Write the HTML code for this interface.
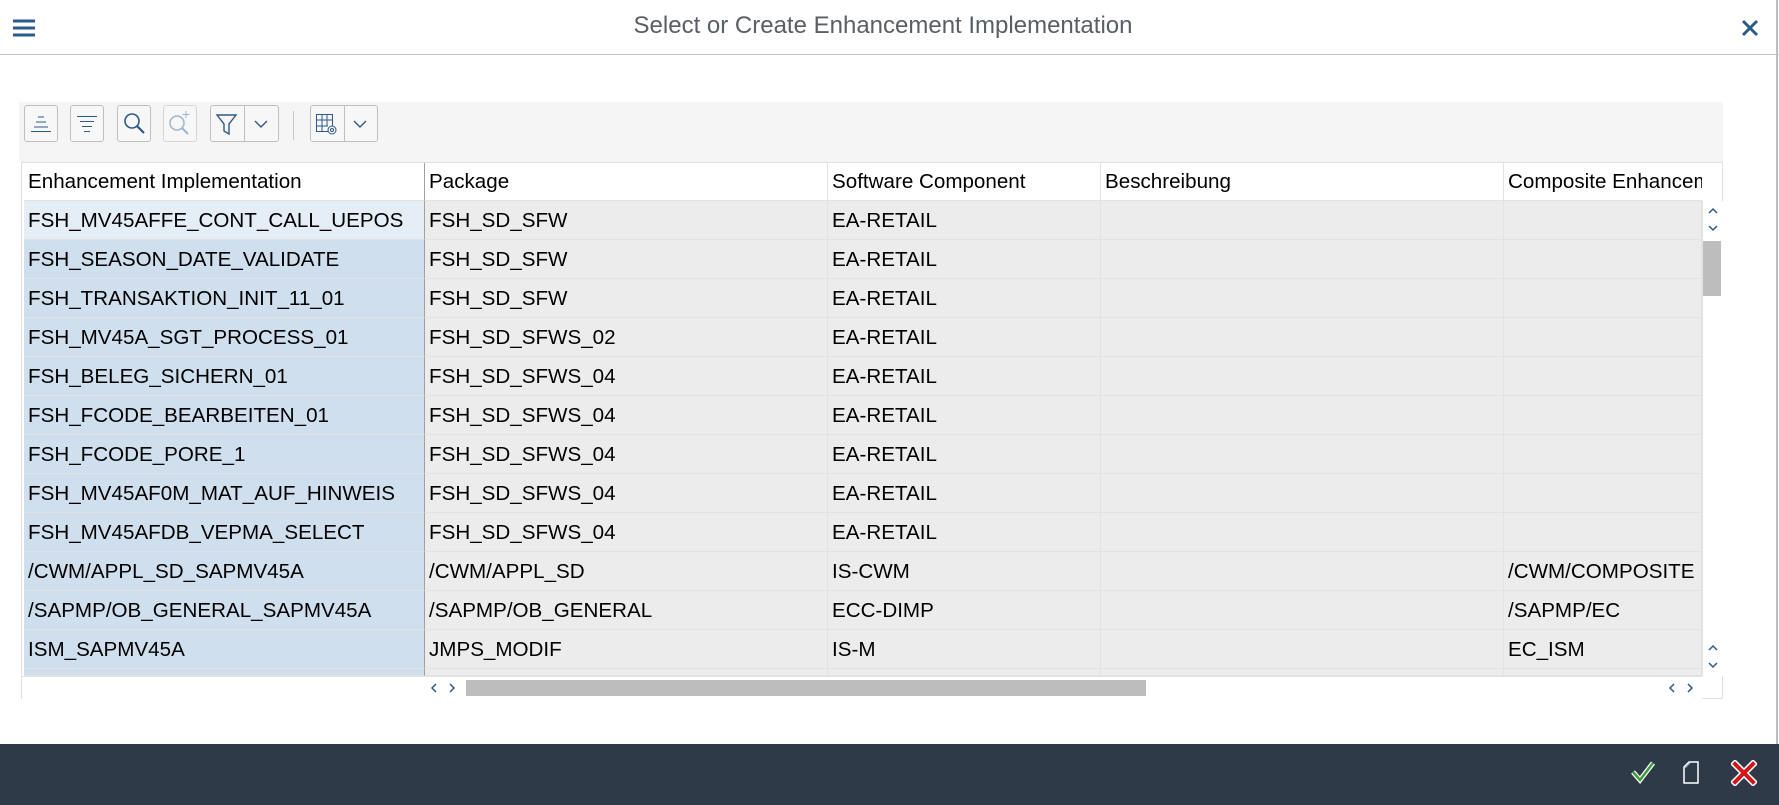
<!DOCTYPE html>
<html><head><meta charset="utf-8"><style>
*{margin:0;padding:0;box-sizing:border-box}
body{width:1779px;height:805px;overflow:hidden;background:#fff;font-family:"Liberation Sans",Arial,sans-serif;position:relative}
.abs{position:absolute}
.hdr{left:0;top:0;width:1779px;height:55px;border-bottom:1px solid #c4c4c4}
.title{left:0;width:1766px;top:12px;text-align:center;font-size:24px;color:#5a5f64}
.tb{left:19px;top:102px;width:1704px;height:60px;background:#f5f5f5}
.btn{position:absolute;top:105px;height:37px;border:1px solid #bfbfbf;border-radius:3px;background:#f7f7f7}
.tbl{left:21px;top:162px;width:1702px;height:537px;border:1px solid #e0e0e0;background:#fff}
.row{position:absolute;left:24px;height:39px;font-size:20.6px;line-height:39px;color:#000}
.c{position:absolute;top:0;height:39px;padding-left:4px;white-space:nowrap;overflow:hidden;border-bottom:1px solid #e2e2e2;border-right:1px solid #e2e2e2}
.foot{left:0;top:744px;width:1779px;height:61px;background:#2e3a48}
</style></head><body>
<div class="abs hdr"></div>
<svg class="abs" style="left:12px;top:18px" width="24" height="20"><g stroke="#2c5a8a" stroke-width="3"><line x1="1" y1="3" x2="23" y2="3"/><line x1="1" y1="10" x2="23" y2="10"/><line x1="1" y1="17" x2="23" y2="17"/></g></svg>
<div class="abs title">Select or Create Enhancement Implementation</div>
<svg class="abs" style="left:1740px;top:18px" width="20" height="20"><g stroke="#2c5a8a" stroke-width="3"><line x1="3" y1="3" x2="17" y2="17"/><line x1="17" y1="3" x2="3" y2="17"/></g></svg>
<div class="abs" style="left:1776px;top:0;width:2px;height:744px;background:#bdbdbd"></div>

<div class="abs tb"></div>
<div class="btn" style="left:24px;width:34px"><svg width="32" height="35"><g stroke="#2c5a8a" stroke-width="1"><line x1="13" y1="11" x2="19" y2="11"/><line x1="11" y1="16" x2="21" y2="16"/><line x1="9" y1="21" x2="23" y2="21"/><line x1="6" y1="25.5" x2="26" y2="25.5"/></g></svg></div>
<div class="btn" style="left:70px;width:34px"><svg width="32" height="35"><g stroke="#2c5a8a" stroke-width="1"><line x1="6" y1="10.5" x2="26" y2="10.5"/><line x1="9" y1="15.5" x2="23" y2="15.5"/><line x1="11" y1="20.5" x2="21" y2="20.5"/><line x1="13" y1="25.5" x2="19" y2="25.5"/></g></svg></div>
<div class="btn" style="left:117px;width:34px"><svg width="32" height="35"><circle cx="14" cy="15" r="7" fill="none" stroke="#2c5a8a" stroke-width="1.6"/><line x1="19" y1="20" x2="26" y2="27" stroke="#2c5a8a" stroke-width="2.2"/></svg></div>
<div class="btn" style="left:163px;width:34px;border-color:#d6d6d6"><svg width="32" height="35"><circle cx="13" cy="17" r="7" fill="none" stroke="#9fb6cc" stroke-width="1.5"/><line x1="18" y1="22" x2="24" y2="28" stroke="#9fb6cc" stroke-width="2"/><line x1="22" y1="5" x2="22" y2="12" stroke="#9fb6cc"/><line x1="18.5" y1="8.5" x2="25.5" y2="8.5" stroke="#9fb6cc"/></svg></div>
<div class="btn" style="left:210px;width:69px"><svg width="67" height="35"><path d="M6 9 H25 L18 18 V28 L13 25 V18 Z" fill="none" stroke="#2c5a8a" stroke-width="1.4"/><line x1="33.5" y1="0" x2="33.5" y2="35" stroke="#bfbfbf"/><path d="M44 15 L50 21 L56 15" fill="none" stroke="#2c5a8a" stroke-width="1.4"/></svg></div>
<div class="abs" style="left:293px;top:111px;width:1px;height:29px;background:#c8c8c8"></div>
<div class="btn" style="left:310px;width:68px"><svg width="66" height="35"><g stroke="#2c5a8a" stroke-width="1" fill="none"><rect x="5.5" y="8.5" width="16" height="17"/><line x1="5.5" y1="14" x2="21.5" y2="14"/><line x1="5.5" y1="20" x2="17" y2="20"/><line x1="11" y1="8.5" x2="11" y2="25.5"/><line x1="16" y1="8.5" x2="16" y2="20"/><circle cx="21" cy="24" r="4" fill="#f7f7f7"/><circle cx="21" cy="24" r="1.5"/></g><line x1="33.5" y1="0" x2="33.5" y2="35" stroke="#bfbfbf"/><path d="M43 15 L49 21 L55 15" fill="none" stroke="#2c5a8a" stroke-width="1.4"/></svg></div>

<div class="abs tbl"></div>
<div class="row" style="top:163px;background:#f5f5f5;height:38px;line-height:38px">
<div class="c" style="left:0;width:401px;height:38px;border-right-color:#a0a0a0">Enhancement Implementation</div>
<div class="c" style="left:401px;width:403px;height:38px">Package</div>
<div class="c" style="left:804px;width:273px;height:38px">Software Component</div>
<div class="c" style="left:1077px;width:403px;height:38px">Beschreibung</div>
<div class="c" style="left:1480px;width:198px;height:38px;border-right:none">Composite Enhancement</div>
</div>
<div class="abs" style="left:1702px;top:201px;width:21px;height:475px;background:#fff;border-left:1px solid #e2e2e2"></div>
<svg class="abs" style="left:1702px;top:201px" width="21" height="475"><g stroke="#2c5a8a" stroke-width="1.5" fill="none"><path d="M7 12 L11 8 L15 12"/><path d="M7 25 L11 29 L15 25"/><path d="M7 449 L11 445 L15 449"/><path d="M7 462 L11 466 L15 462"/></g><rect x="1" y="40" width="18" height="55" fill="#bdbdbd"/></svg>
<div class="abs" style="left:22px;top:676px;width:1680px;height:23px;background:#fff;border-top:1px solid #e2e2e2"></div>
<div class="abs" style="left:466px;top:680px;width:680px;height:16px;background:#bdbdbd"></div>
<svg class="abs" style="left:428px;top:680px" width="30" height="16"><g stroke="#2c5a8a" stroke-width="1.5" fill="none"><path d="M8 4 L4 8 L8 12"/><path d="M22 4 L26 8 L22 12"/></g></svg>
<svg class="abs" style="left:1666px;top:680px" width="30" height="16"><g stroke="#2c5a8a" stroke-width="1.5" fill="none"><path d="M8 4 L4 8 L8 12"/><path d="M22 4 L26 8 L22 12"/></g></svg>

<div class="abs foot"></div>
<svg class="abs" style="left:1630px;top:760px" width="26" height="24"><path d="M3 12 L10 20 L23 3" fill="none" stroke="#fff" stroke-width="5"/><path d="M3 12 L10 20 L23 3" fill="none" stroke="#3f9a3a" stroke-width="2.5"/></svg>
<svg class="abs" style="left:1682px;top:760px" width="20" height="26"><path d="M2 7 L7 2 H16 V23 H2 Z" fill="#2e3a48" stroke="#fff" stroke-width="1.5"/><path d="M3 8 L8 3" stroke="#8cb8e0"/></svg>
<svg class="abs" style="left:1731px;top:760px" width="26" height="26"><g stroke-linecap="square"><path d="M4 4 L22 22 M22 4 L4 22" stroke="#fff" stroke-width="7"/><path d="M4 4 L22 22 M22 4 L4 22" stroke="#d01818" stroke-width="4"/></g></svg>

<div style="position:absolute;left:0;top:0">
<div class="row" style="top:201px"><div class="c" style="left:0;width:401px;background:#e5edf6;border-right-color:#a0a0a0">FSH_MV45AFFE_CONT_CALL_UEPOS</div><div class="c" style="left:401px;width:403px;background:#ececec">FSH_SD_SFW</div><div class="c" style="left:804px;width:273px;background:#ececec">EA-RETAIL</div><div class="c" style="left:1077px;width:403px;background:#ececec"></div><div class="c" style="left:1480px;width:198px;background:#ececec"></div></div>
<div class="row" style="top:240px"><div class="c" style="left:0;width:401px;background:#cfdfee;border-right-color:#a0a0a0">FSH_SEASON_DATE_VALIDATE</div><div class="c" style="left:401px;width:403px;background:#ececec">FSH_SD_SFW</div><div class="c" style="left:804px;width:273px;background:#ececec">EA-RETAIL</div><div class="c" style="left:1077px;width:403px;background:#ececec"></div><div class="c" style="left:1480px;width:198px;background:#ececec"></div></div>
<div class="row" style="top:279px"><div class="c" style="left:0;width:401px;background:#cfdfee;border-right-color:#a0a0a0">FSH_TRANSAKTION_INIT_11_01</div><div class="c" style="left:401px;width:403px;background:#ececec">FSH_SD_SFW</div><div class="c" style="left:804px;width:273px;background:#ececec">EA-RETAIL</div><div class="c" style="left:1077px;width:403px;background:#ececec"></div><div class="c" style="left:1480px;width:198px;background:#ececec"></div></div>
<div class="row" style="top:318px"><div class="c" style="left:0;width:401px;background:#cfdfee;border-right-color:#a0a0a0">FSH_MV45A_SGT_PROCESS_01</div><div class="c" style="left:401px;width:403px;background:#ececec">FSH_SD_SFWS_02</div><div class="c" style="left:804px;width:273px;background:#ececec">EA-RETAIL</div><div class="c" style="left:1077px;width:403px;background:#ececec"></div><div class="c" style="left:1480px;width:198px;background:#ececec"></div></div>
<div class="row" style="top:357px"><div class="c" style="left:0;width:401px;background:#cfdfee;border-right-color:#a0a0a0">FSH_BELEG_SICHERN_01</div><div class="c" style="left:401px;width:403px;background:#ececec">FSH_SD_SFWS_04</div><div class="c" style="left:804px;width:273px;background:#ececec">EA-RETAIL</div><div class="c" style="left:1077px;width:403px;background:#ececec"></div><div class="c" style="left:1480px;width:198px;background:#ececec"></div></div>
<div class="row" style="top:396px"><div class="c" style="left:0;width:401px;background:#cfdfee;border-right-color:#a0a0a0">FSH_FCODE_BEARBEITEN_01</div><div class="c" style="left:401px;width:403px;background:#ececec">FSH_SD_SFWS_04</div><div class="c" style="left:804px;width:273px;background:#ececec">EA-RETAIL</div><div class="c" style="left:1077px;width:403px;background:#ececec"></div><div class="c" style="left:1480px;width:198px;background:#ececec"></div></div>
<div class="row" style="top:435px"><div class="c" style="left:0;width:401px;background:#cfdfee;border-right-color:#a0a0a0">FSH_FCODE_PORE_1</div><div class="c" style="left:401px;width:403px;background:#ececec">FSH_SD_SFWS_04</div><div class="c" style="left:804px;width:273px;background:#ececec">EA-RETAIL</div><div class="c" style="left:1077px;width:403px;background:#ececec"></div><div class="c" style="left:1480px;width:198px;background:#ececec"></div></div>
<div class="row" style="top:474px"><div class="c" style="left:0;width:401px;background:#cfdfee;border-right-color:#a0a0a0">FSH_MV45AF0M_MAT_AUF_HINWEIS</div><div class="c" style="left:401px;width:403px;background:#ececec">FSH_SD_SFWS_04</div><div class="c" style="left:804px;width:273px;background:#ececec">EA-RETAIL</div><div class="c" style="left:1077px;width:403px;background:#ececec"></div><div class="c" style="left:1480px;width:198px;background:#ececec"></div></div>
<div class="row" style="top:513px"><div class="c" style="left:0;width:401px;background:#cfdfee;border-right-color:#a0a0a0">FSH_MV45AFDB_VEPMA_SELECT</div><div class="c" style="left:401px;width:403px;background:#ececec">FSH_SD_SFWS_04</div><div class="c" style="left:804px;width:273px;background:#ececec">EA-RETAIL</div><div class="c" style="left:1077px;width:403px;background:#ececec"></div><div class="c" style="left:1480px;width:198px;background:#ececec"></div></div>
<div class="row" style="top:552px"><div class="c" style="left:0;width:401px;background:#cfdfee;border-right-color:#a0a0a0">/CWM/APPL_SD_SAPMV45A</div><div class="c" style="left:401px;width:403px;background:#ececec">/CWM/APPL_SD</div><div class="c" style="left:804px;width:273px;background:#ececec">IS-CWM</div><div class="c" style="left:1077px;width:403px;background:#ececec"></div><div class="c" style="left:1480px;width:198px;background:#ececec">/CWM/COMPOSITE</div></div>
<div class="row" style="top:591px"><div class="c" style="left:0;width:401px;background:#cfdfee;border-right-color:#a0a0a0">/SAPMP/OB_GENERAL_SAPMV45A</div><div class="c" style="left:401px;width:403px;background:#ececec">/SAPMP/OB_GENERAL</div><div class="c" style="left:804px;width:273px;background:#ececec">ECC-DIMP</div><div class="c" style="left:1077px;width:403px;background:#ececec"></div><div class="c" style="left:1480px;width:198px;background:#ececec">/SAPMP/EC</div></div>
<div class="row" style="top:630px"><div class="c" style="left:0;width:401px;background:#cfdfee;border-right-color:#a0a0a0">ISM_SAPMV45A</div><div class="c" style="left:401px;width:403px;background:#ececec">JMPS_MODIF</div><div class="c" style="left:804px;width:273px;background:#ececec">IS-M</div><div class="c" style="left:1077px;width:403px;background:#ececec"></div><div class="c" style="left:1480px;width:198px;background:#ececec">EC_ISM</div></div>
<div class="row" style="top:669px;height:7px"><div class="c" style="left:0;width:401px;height:7px;background:#cfdfee;border-right-color:#a0a0a0"></div><div class="c" style="left:401px;width:403px;height:7px;background:#ececec"></div><div class="c" style="left:804px;width:273px;height:7px;background:#ececec"></div><div class="c" style="left:1077px;width:403px;height:7px;background:#ececec"></div><div class="c" style="left:1480px;width:198px;height:7px;background:#ececec"></div></div>
</div>
</body></html>
